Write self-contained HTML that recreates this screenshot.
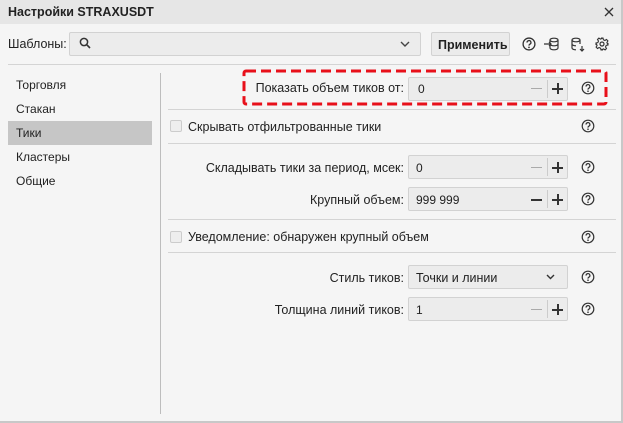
<!DOCTYPE html>
<html><head><meta charset="utf-8"><style>
*{box-sizing:border-box;margin:0;padding:0}
body{width:623px;height:423px;background:#f5f5f5;font-family:"Liberation Sans",sans-serif;font-size:12px;color:#222;position:relative;overflow:hidden}
.a{position:absolute}
.t{white-space:nowrap}
.inp{position:absolute;background:#ececec;border:1px solid #d2d2d2;border-radius:2px}
.hl{position:absolute;height:1px;background:#d4d4d4}
.q{position:absolute;width:14px;height:14px}
</style></head><body>
<div class="a" style="left:0;top:0;width:623px;height:24px;background:#e6e6e6"></div>
<div class="a t" style="left:8px;top:5px;font-size:12.5px;font-weight:bold;color:#222">Настройки STRAXUSDT</div>
<svg class="a" style="left:604px;top:7px" width="10" height="10" viewBox="0 0 10 10"><path d="M1 1l8 8M9 1l-8 8" stroke="#333" stroke-width="1.3"/></svg>
<div class="a" style="right:0;top:0;width:2px;height:423px;background:#c8c8c8"></div>
<div class="a" style="left:0;bottom:0;width:623px;height:2px;background:#c8c8c8"></div>

<div class="a t" style="left:8px;top:37px;font-size:12.5px">Шаблоны:</div>
<div class="inp" style="left:69px;top:32px;width:352px;height:24px"></div>
<svg class="a" style="left:79px;top:37px" width="12" height="12" viewBox="0 0 12 12"><circle cx="5" cy="5" r="3.6" fill="none" stroke="#333" stroke-width="1.5"/><path d="M7.6 7.6L11 11" stroke="#333" stroke-width="1.6"/></svg>
<svg class="a" style="left:400px;top:41px" width="10" height="7" viewBox="0 0 10 7"><path d="M1 1l4 4 4-4" fill="none" stroke="#444" stroke-width="1.4"/></svg>
<div class="inp" style="left:431px;top:32px;width:79px;height:24px;background:#ebebeb"></div>
<div class="a t" style="left:438px;top:38px;font-size:12.5px;font-weight:bold;color:#222">Применить</div>
<svg class="q" style="left:522px;top:37px" viewBox="0 0 13 13"><circle cx="6.5" cy="6.5" r="5.5" fill="none" stroke="#333" stroke-width="1.2"/><path d="M4.7 5.2a1.8 1.8 0 1 1 2.6 1.5c-.6.3-.8.6-.8 1.3" fill="none" stroke="#333" stroke-width="1.2"/><circle cx="6.5" cy="9.6" r=".8" fill="#333"/></svg>
<svg class="a" style="left:544px;top:37px" width="16" height="14" viewBox="0 0 16 14"><ellipse cx="10" cy="3" rx="4" ry="1.8" fill="none" stroke="#333" stroke-width="1.2"/><path d="M6 3v8c0 1 1.8 1.8 4 1.8s4-.8 4-1.8V3M6 7c0 1 1.8 1.8 4 1.8s4-.8 4-1.8" fill="none" stroke="#333" stroke-width="1.2"/><path d="M0 7h7M5 5l2 2-2 2" fill="none" stroke="#333" stroke-width="1.2"/></svg>
<svg class="a" style="left:571px;top:37px" width="14" height="15" viewBox="0 0 14 15"><ellipse cx="5" cy="3" rx="4" ry="1.8" fill="none" stroke="#333" stroke-width="1.2"/><path d="M1 3v8c0 1 1.8 1.8 4 1.8M9 3v4M1 7c0 1 1.8 1.8 4 1.8" fill="none" stroke="#333" stroke-width="1.2"/><path d="M11 9v5M9 12l2 2 2-2" fill="none" stroke="#333" stroke-width="1.2"/></svg>
<svg class="a" style="left:595px;top:37px" width="14" height="14" viewBox="0 0 14 14"><circle cx="7" cy="7" r="2" fill="none" stroke="#333" stroke-width="1.2"/><path d="M6 1h2l.4 1.8 1.5.7 1.6-1 1.4 1.4-1 1.6.7 1.5L13 6v2l-1.8.4-.7 1.5 1 1.6-1.4 1.4-1.6-1-1.5.7L8 13H6l-.4-1.8-1.5-.7-1.6 1-1.4-1.4 1-1.6-.7-1.5L1 8V6l1.8-.4.7-1.5-1-1.6 1.4-1.4 1.6 1 1.5-.7z" fill="none" stroke="#333" stroke-width="1.1"/></svg>
<div class="hl" style="left:8px;top:64px;width:608px"></div>

<div class="a" style="left:160px;top:73px;width:1px;height:341px;background:#bdbdbd"></div>
<div class="a" style="left:8px;top:121px;width:144px;height:24px;background:#c6c6c6"></div>
<div class="a t" style="left:16px;top:73px;line-height:24px">Торговля<br>Стакан<br>Тики<br>Кластеры<br>Общие</div>

<svg class="a" style="left:242px;top:69px" width="366" height="37"><rect x="2" y="2" width="362" height="33" rx="2" fill="none" stroke="#e8101a" stroke-width="3" stroke-dasharray="10 5"/></svg>
<svg width="0" height="0" style="position:absolute"><defs><g id="qq"><circle cx="7" cy="7" r="5.8" fill="none" stroke="#333" stroke-width="1.2"/><path d="M5.1 5.6a1.9 1.9 0 1 1 2.7 1.6c-.6.3-.8.6-.8 1.4" fill="none" stroke="#333" stroke-width="1.2"/><circle cx="7" cy="10.2" r=".8" fill="#333"/></g></defs></svg>

<div class="a t" style="right:219px;top:81px;font-size:12.5px">Показать объем тиков от:</div>
<div class="inp" style="left:408px;top:77px;width:160px;height:24px"></div>
<div class="a" style="left:418px;top:82px">0</div>
<div class="a" style="left:531px;top:88px;width:11px;height:1px;background:#aaa"></div>
<div class="a" style="left:547px;top:80px;width:1px;height:18px;background:#ccc"></div>
<div class="a" style="left:552px;top:88px;width:11px;height:1.5px;background:#333"></div><div class="a" style="left:557px;top:83px;width:1.5px;height:11px;background:#333"></div>
<svg class="q" style="left:581px;top:81px"><use href="#qq"/></svg>
<div class="hl" style="left:168px;top:109px;width:448px"></div>

<div class="a" style="left:170px;top:120px;width:12px;height:12px;border:1px solid #ccc;background:#eee;border-radius:2px"></div>
<div class="a t" style="left:188px;top:120px;font-size:12.5px">Скрывать отфильтрованные тики</div>
<svg class="q" style="left:581px;top:119px"><use href="#qq"/></svg>
<div class="hl" style="left:168px;top:143px;width:448px"></div>

<div class="a t" style="right:219px;top:161px;font-size:12.5px">Складывать тики за период, мсек:</div>
<div class="inp" style="left:408px;top:155px;width:160px;height:24px"></div>
<div class="a" style="left:416px;top:161px">0</div>
<div class="a" style="left:531px;top:167px;width:11px;height:1px;background:#aaa"></div>
<div class="a" style="left:547px;top:158px;width:1px;height:18px;background:#ccc"></div>
<div class="a" style="left:552px;top:167px;width:11px;height:1.5px;background:#333"></div><div class="a" style="left:557px;top:162px;width:1.5px;height:11px;background:#333"></div>
<svg class="q" style="left:581px;top:160px"><use href="#qq"/></svg>

<div class="a t" style="right:219px;top:193px;font-size:12.5px">Крупный объем:</div>
<div class="inp" style="left:408px;top:187px;width:160px;height:24px"></div>
<div class="a" style="left:416px;top:193px">999 999</div>
<div class="a" style="left:531px;top:199px;width:11px;height:1.5px;background:#333"></div>
<div class="a" style="left:547px;top:190px;width:1px;height:18px;background:#ccc"></div>
<div class="a" style="left:552px;top:199px;width:11px;height:1.5px;background:#333"></div><div class="a" style="left:557px;top:194px;width:1.5px;height:11px;background:#333"></div>
<svg class="q" style="left:581px;top:192px"><use href="#qq"/></svg>
<div class="hl" style="left:168px;top:219px;width:448px"></div>

<div class="a" style="left:170px;top:231px;width:12px;height:12px;border:1px solid #ccc;background:#eee;border-radius:2px"></div>
<div class="a t" style="left:188px;top:230px;font-size:12.5px">Уведомление: обнаружен крупный объем</div>
<svg class="q" style="left:581px;top:230px"><use href="#qq"/></svg>
<div class="hl" style="left:168px;top:252px;width:448px"></div>

<div class="a t" style="right:219px;top:271px;font-size:12.5px">Стиль тиков:</div>
<div class="inp" style="left:408px;top:265px;width:160px;height:24px"></div>
<div class="a" style="left:416px;top:271px;font-size:12.5px">Точки и линии</div>
<svg class="a" style="left:546px;top:274px" width="9" height="6" viewBox="0 0 9 6"><path d="M1 1l3.5 3.5L8 1" fill="none" stroke="#333" stroke-width="1.4"/></svg>
<svg class="q" style="left:581px;top:270px"><use href="#qq"/></svg>

<div class="a t" style="right:219px;top:303px;font-size:12.5px">Толщина линий тиков:</div>
<div class="inp" style="left:408px;top:297px;width:160px;height:24px"></div>
<div class="a" style="left:416px;top:303px">1</div>
<div class="a" style="left:531px;top:309px;width:11px;height:1px;background:#aaa"></div>
<div class="a" style="left:547px;top:300px;width:1px;height:18px;background:#ccc"></div>
<div class="a" style="left:552px;top:309px;width:11px;height:1.5px;background:#333"></div><div class="a" style="left:557px;top:304px;width:1.5px;height:11px;background:#333"></div>
<svg class="q" style="left:581px;top:302px"><use href="#qq"/></svg>
</body></html>
